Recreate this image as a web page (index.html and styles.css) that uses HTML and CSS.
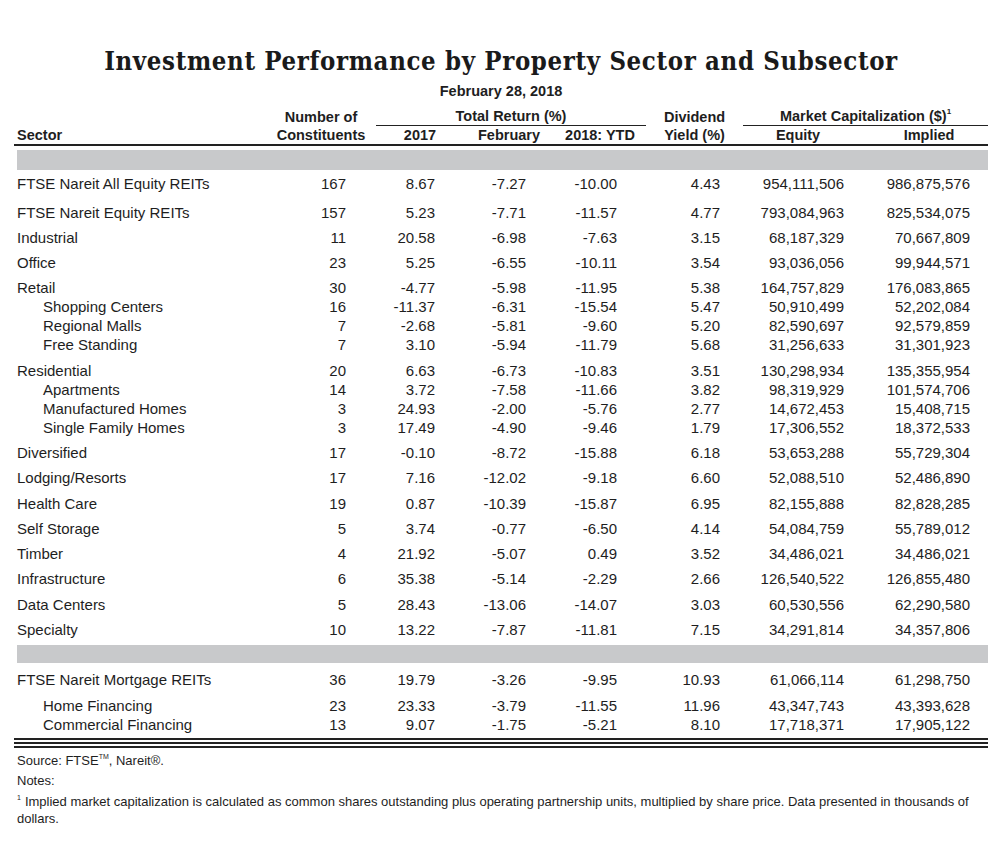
FILE: index.html
```html
<!DOCTYPE html>
<html lang="en">
    <head>
        <meta charset="UTF-8" />
        <meta name="viewport" content="width=device-width, initial-scale=1.0" />
        <title>Investment Performance by Property Sector and Subsector</title>
        <link rel="stylesheet" href="styles.css">
    </head>
    <body>
        <div class="page">
            <h1 class="title">Investment Performance by Property Sector and Subsector</h1>
            <div class="date">February 28, 2018</div>
            <table class="perf">
                <colgroup>
                    <col class="c-sector" />
                    <col class="c-count" />
                    <col class="c-y2017" />
                    <col class="c-feb" />
                    <col class="c-ytd" />
                    <col class="c-yield" />
                    <col class="c-equity" />
                    <col class="c-implied" />
                </colgroup>
                <thead>
                    <tr class="hd-top">
                        <th></th>
                        <th>Number of</th>
                        <th colspan="3" class="grp">Total Return (%)</th>
                        <th>Dividend</th>
                        <th colspan="2" class="grp">Market Capitalization ($)<sup>1</sup></th>
                    </tr>
                    <tr class="hd-bot">
                        <th class="left">Sector</th>
                        <th>Constituents</th>
                        <th>2017</th>
                        <th>February</th>
                        <th>2018: YTD</th>
                        <th>Yield (%)</th>
                        <th>Equity</th>
                        <th class="implied">Implied</th>
                    </tr>
                </thead>
                <tbody>
                    <tr class="band"><td colspan="8"><div class="fill"></div></td></tr>
                    <tr class="main first"><td>FTSE Nareit All Equity REITs</td><td>167</td><td>8.67</td><td>-7.27</td><td>-10.00</td><td>4.43</td><td>954,111,506</td><td>986,875,576</td></tr>
                    <tr class="main gap"><td>FTSE Nareit Equity REITs</td><td>157</td><td>5.23</td><td>-7.71</td><td>-11.57</td><td>4.77</td><td>793,084,963</td><td>825,534,075</td></tr>
                    <tr class="main"><td>Industrial</td><td>11</td><td>20.58</td><td>-6.98</td><td>-7.63</td><td>3.15</td><td>68,187,329</td><td>70,667,809</td></tr>
                    <tr class="main"><td>Office</td><td>23</td><td>5.25</td><td>-6.55</td><td>-10.11</td><td>3.54</td><td>93,036,056</td><td>99,944,571</td></tr>
                    <tr class="main"><td>Retail</td><td>30</td><td>-4.77</td><td>-5.98</td><td>-11.95</td><td>5.38</td><td>164,757,829</td><td>176,083,865</td></tr>
                    <tr class="sub"><td>Shopping Centers</td><td>16</td><td>-11.37</td><td>-6.31</td><td>-15.54</td><td>5.47</td><td>50,910,499</td><td>52,202,084</td></tr>
                    <tr class="sub"><td>Regional Malls</td><td>7</td><td>-2.68</td><td>-5.81</td><td>-9.60</td><td>5.20</td><td>82,590,697</td><td>92,579,859</td></tr>
                    <tr class="sub"><td>Free Standing</td><td>7</td><td>3.10</td><td>-5.94</td><td>-11.79</td><td>5.68</td><td>31,256,633</td><td>31,301,923</td></tr>
                    <tr class="main"><td>Residential</td><td>20</td><td>6.63</td><td>-6.73</td><td>-10.83</td><td>3.51</td><td>130,298,934</td><td>135,355,954</td></tr>
                    <tr class="sub"><td>Apartments</td><td>14</td><td>3.72</td><td>-7.58</td><td>-11.66</td><td>3.82</td><td>98,319,929</td><td>101,574,706</td></tr>
                    <tr class="sub"><td>Manufactured Homes</td><td>3</td><td>24.93</td><td>-2.00</td><td>-5.76</td><td>2.77</td><td>14,672,453</td><td>15,408,715</td></tr>
                    <tr class="sub"><td>Single Family Homes</td><td>3</td><td>17.49</td><td>-4.90</td><td>-9.46</td><td>1.79</td><td>17,306,552</td><td>18,372,533</td></tr>
                    <tr class="main"><td>Diversified</td><td>17</td><td>-0.10</td><td>-8.72</td><td>-15.88</td><td>6.18</td><td>53,653,288</td><td>55,729,304</td></tr>
                    <tr class="main"><td>Lodging/Resorts</td><td>17</td><td>7.16</td><td>-12.02</td><td>-9.18</td><td>6.60</td><td>52,088,510</td><td>52,486,890</td></tr>
                    <tr class="main"><td>Health Care</td><td>19</td><td>0.87</td><td>-10.39</td><td>-15.87</td><td>6.95</td><td>82,155,888</td><td>82,828,285</td></tr>
                    <tr class="main"><td>Self Storage</td><td>5</td><td>3.74</td><td>-0.77</td><td>-6.50</td><td>4.14</td><td>54,084,759</td><td>55,789,012</td></tr>
                    <tr class="main"><td>Timber</td><td>4</td><td>21.92</td><td>-5.07</td><td>0.49</td><td>3.52</td><td>34,486,021</td><td>34,486,021</td></tr>
                    <tr class="main"><td>Infrastructure</td><td>6</td><td>35.38</td><td>-5.14</td><td>-2.29</td><td>2.66</td><td>126,540,522</td><td>126,855,480</td></tr>
                    <tr class="main"><td>Data Centers</td><td>5</td><td>28.43</td><td>-13.06</td><td>-14.07</td><td>3.03</td><td>60,530,556</td><td>62,290,580</td></tr>
                    <tr class="main"><td>Specialty</td><td>10</td><td>13.22</td><td>-7.87</td><td>-11.81</td><td>7.15</td><td>34,291,814</td><td>34,357,806</td></tr>
                    <tr class="band band2"><td colspan="8"><div class="fill"></div></td></tr>
                    <tr class="main first"><td>FTSE Nareit Mortgage REITs</td><td>36</td><td>19.79</td><td>-3.26</td><td>-9.95</td><td>10.93</td><td>61,066,114</td><td>61,298,750</td></tr>
                    <tr class="sub wide"><td>Home Financing</td><td>23</td><td>23.33</td><td>-3.79</td><td>-11.55</td><td>11.96</td><td>43,347,743</td><td>43,393,628</td></tr>
                    <tr class="sub"><td>Commercial Financing</td><td>13</td><td>9.07</td><td>-1.75</td><td>-5.21</td><td>8.10</td><td>17,718,371</td><td>17,905,122</td></tr>
                </tbody>
            </table>
            <div class="rules"><span></span><span></span><span></span></div>
            <div class="notes">
                <p>Source: FTSE<sup>TM</sup>, Nareit®.</p>
                <p>Notes:</p>
                <p class="foot"><sup class="mark">1</sup>Implied market capitalization is calculated as common shares outstanding plus operating partnership units, multiplied by share price. Data presented in thousands of dollars.</p>
            </div>
        </div>
    </body>
</html>
```

FILE: styles.css
```css
* {
    margin: 0;
    padding: 0;
}
body {
    background: #fff;
    color: #1e1e1e;
    font-family: "Liberation Sans", Arial, sans-serif;
}
.page {
    width: 974px;
    padding: 45px 12px 0 14px;
}

/* title block */
.title {
    font-family: "DejaVu Serif", "Liberation Serif", serif;
    font-stretch: condensed;
    font-size: 25.5px;
    letter-spacing: 0.65px;
    line-height: 32px;
    font-weight: bold;
    text-align: center;
    color: #1a1a1a;
}
.date {
    margin-top: 6px;
    font-size: 14.5px;
    line-height: 17px;
    font-weight: bold;
    text-align: center;
}

/* table */
.perf {
    width: 974px;
    margin-top: 8px;
    table-layout: fixed;
    border-collapse: separate;
    border-spacing: 0;
}
.c-sector { width: 252px; }
.c-count { width: 110px; }
.c-y2017 { width: 88px; }
.c-feb { width: 90px; }
.c-ytd { width: 92px; }
.c-yield { width: 97px; }
.c-equity { width: 110px; }
.c-implied { width: 135px; }

.perf th {
    font-size: 14.5px;
    line-height: 17px;
    font-weight: bold;
    text-align: center;
    white-space: nowrap;
}
.perf th sup {
    font-size: 8px;
    vertical-align: 7px;
    line-height: 0;
}
.hd-top .grp {
    border-bottom: 1.5px solid #222;
}
.hd-bot th {
    padding-top: 1px;
    border-bottom: 2px solid #222;
}
.hd-bot .left {
    text-align: left;
    padding-left: 3px;
}
.hd-bot .implied {
    padding-left: 17px;
}

.perf td {
    font-size: 15px;
    line-height: 19px;
    text-align: right;
    white-space: nowrap;
}
.perf td:nth-child(1) { text-align: left; padding-left: 3px; }
.perf td:nth-child(2) { padding-right: 30px; }
.perf td:nth-child(3) { padding-right: 29px; }
.perf td:nth-child(4) { padding-right: 28px; }
.perf td:nth-child(5) { padding-right: 29px; }
.perf td:nth-child(6) { padding-right: 23px; }
.perf td:nth-child(7) { padding-right: 9px; }
.perf td:nth-child(8) { padding-right: 18px; }

.main td {
    padding-top: 6.3px;
}
.main.first td {
    padding-top: 3.5px;
}
.main.gap td {
    padding-top: 10px;
}
.sub td:nth-child(1) {
    padding-left: 29px;
}
.sub.wide td {
    padding-top: 7px;
}

.band td {
    padding: 4px 0 0 0;
}
.band .fill {
    height: 20px;
    background: #c8c9cb;
}
.band2 td {
    padding-top: 6px;
}
.band2 .fill {
    height: 18px;
}
.band2 + .main.first td {
    padding-top: 6.5px;
}

/* closing rules */
.rules {
    margin-top: 4px;
    display: flex;
    flex-direction: column;
    gap: 2px;
}
.rules span {
    display: block;
    height: 2px;
    background: #222;
}

/* notes */
.notes {
    font-size: 13px;
    line-height: 17px;
    padding-left: 3px;
}
.notes p {
    margin-top: 3px;
}
.notes p:first-child {
    margin-top: 4px;
}
.notes .foot {
    margin-top: 4px;
    width: 965px;
}
.notes sup {
    font-size: 7px;
    line-height: 9px;
    vertical-align: top;
}
.notes .mark {
    margin-right: 4px;
}
```
